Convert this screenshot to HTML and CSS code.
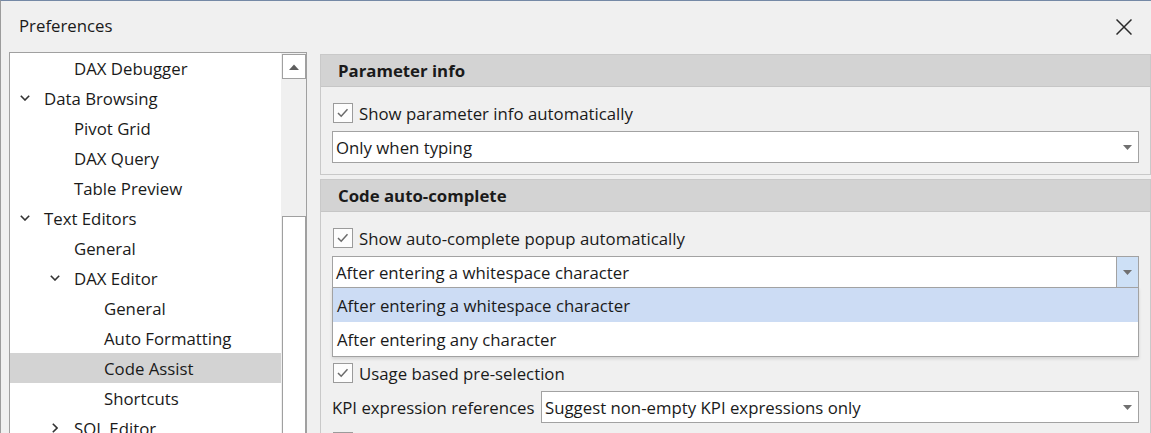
FILE: index.html
```html
<!DOCTYPE html>
<html lang="en">
<head>
<meta charset="utf-8">
<title>Preferences</title>
<link rel="stylesheet" href="styles.css">
</head>
<body>
<div class="window">
  <div class="titlebar">
    <span class="title">Preferences</span>
    <button class="close" aria-label="Close">
      <svg width="16" height="16" viewBox="0 0 16 16"><path d="M0.5 0.5 L15.5 15.5 M15.5 0.5 L0.5 15.5" stroke="#2b2b2b" stroke-width="1.5" fill="none"/></svg>
    </button>
  </div>
  <div class="main">
    <div class="tree-panel">
      <ul class="tree">
        <li class="level-1"><span class="twisty"></span><span>DAX Debugger</span></li>
        <li class="level-0"><span class="twisty"><svg class="chev" width="10" height="6" viewBox="0 0 10 6"><path d="M0.8 0.8 L5 5 L9.2 0.8" /></svg></span><span>Data Browsing</span></li>
        <li class="level-1"><span class="twisty"></span><span>Pivot Grid</span></li>
        <li class="level-1"><span class="twisty"></span><span>DAX Query</span></li>
        <li class="level-1"><span class="twisty"></span><span>Table Preview</span></li>
        <li class="level-0"><span class="twisty"><svg class="chev" width="10" height="6" viewBox="0 0 10 6"><path d="M0.8 0.8 L5 5 L9.2 0.8" /></svg></span><span>Text Editors</span></li>
        <li class="level-1"><span class="twisty"></span><span>General</span></li>
        <li class="level-1"><span class="twisty"><svg class="chev" width="10" height="6" viewBox="0 0 10 6"><path d="M0.8 0.8 L5 5 L9.2 0.8" /></svg></span><span>DAX Editor</span></li>
        <li class="level-2"><span class="twisty"></span><span>General</span></li>
        <li class="level-2"><span class="twisty"></span><span>Auto Formatting</span></li>
        <li class="level-2 selected"><span class="twisty"></span><span>Code Assist</span></li>
        <li class="level-2"><span class="twisty"></span><span>Shortcuts</span></li>
        <li class="level-1"><span class="twisty"><svg class="chev right" width="6" height="10" viewBox="0 0 6 10"><path d="M0.8 0.8 L5 5 L0.8 9.2" /></svg></span><span>SQL Editor</span></li>
      </ul>
      <div class="scrollbar">
        <div class="sb-btn">
          <svg width="10" height="6" viewBox="0 0 10 6"><path d="M0 6 L5 0.5 L10 6 Z" fill="#5e5e5e"/></svg>
        </div>
        <div class="sb-thumb"></div>
      </div>
    </div>

    <div class="pages">
      <section class="group">
        <div class="group-head">Parameter info</div>
        <div class="group-body">
          <div class="check-row">
            <span class="checkbox"><svg width="18" height="18" viewBox="0 0 18 18"><path d="M4 9 L7.2 12.2 L13.5 5.2" /></svg></span>
            <span>Show parameter info automatically</span>
          </div>
          <div class="combo">
            <span class="combo-text">Only when typing</span>
            <span class="combo-btn"><svg width="9" height="5" viewBox="0 0 9 5"><path d="M0 0 L9 0 L4.5 5 Z"/></svg></span>
          </div>
        </div>
      </section>

      <section class="group">
        <div class="group-head">Code auto-complete</div>
        <div class="group-body">
          <div class="check-row">
            <span class="checkbox"><svg width="18" height="18" viewBox="0 0 18 18"><path d="M4 9 L7.2 12.2 L13.5 5.2" /></svg></span>
            <span>Show auto-complete popup automatically</span>
          </div>
          <div class="combo open">
            <span class="combo-text">After entering a whitespace character</span>
            <span class="combo-btn"><svg width="9" height="5" viewBox="0 0 9 5"><path d="M0 0 L9 0 L4.5 5 Z"/></svg></span>
            <div class="popup">
              <div class="popup-item hl">After entering a whitespace character</div>
              <div class="popup-item">After entering any character</div>
            </div>
          </div>
          <div class="check-row below-popup">
            <span class="checkbox"><svg width="18" height="18" viewBox="0 0 18 18"><path d="M4 9 L7.2 12.2 L13.5 5.2" /></svg></span>
            <span>Usage based pre-selection</span>
          </div>
          <div class="field-row">
            <span class="field-label">KPI expression references</span>
            <div class="combo">
              <span class="combo-text">Suggest non-empty KPI expressions only</span>
              <span class="combo-btn"><svg width="9" height="5" viewBox="0 0 9 5"><path d="M0 0 L9 0 L4.5 5 Z"/></svg></span>
            </div>
          </div>
          <div class="check-row next-row">
            <span class="checkbox"></span>
          </div>
        </div>
      </section>
    </div>
  </div>
</div>
</body>
</html>
```

FILE: styles.css
```css
* { box-sizing: border-box; }

html, body {
  margin: 0;
  padding: 0;
}

body {
  width: 1151px;
  height: 433px;
  overflow: hidden;
  background: #f0f0f0;
  font-family: "Open Sans", "Noto Sans", sans-serif;
  font-size: 16.8px;
  color: #1a1a1a;
}

.window {
  height: 433px;
  border-top: 1px solid #7589a6;
  border-left: 1px solid #9c9c9c;
  overflow: hidden;
}

/* Title bar */
.titlebar {
  height: 51px;
  display: flex;
  align-items: center;
  justify-content: space-between;
  padding-left: 18px;
}

.title {
  color: #1a1a1a;
  margin-bottom: 3px;
}

.close {
  width: 46px;
  height: 51px;
  margin-right: 4px;
  border: 0;
  padding: 0;
  background: none;
  display: flex;
  align-items: center;
  justify-content: center;
}

/* Main area */
.main {
  display: flex;
  align-items: flex-start;
  padding-left: 8px;
}

.tree-panel {
  width: 298px;
  height: 420px;
  border: 1px solid #a0a0a0;
  background: #fff;
  display: flex;
}

.tree {
  list-style: none;
  margin: 0;
  padding: 0;
  width: 271px;
  flex: none;
}

.tree li {
  height: 30px;
  display: flex;
  align-items: center;
  white-space: nowrap;
  color: #1a1a1a;
}

.tree li.selected {
  background: #d3d3d3;
}

.tree li.level-1 { padding-left: 30px; }
.tree li.level-2 { padding-left: 60px; }

.twisty {
  width: 34px;
  flex: none;
  padding-left: 10px;
  display: flex;
  align-items: center;
}

.chev path {
  fill: none;
  stroke: #333;
  stroke-width: 1.6;
}

.chev.right {
  margin-left: 2px;
}

.scrollbar {
  width: 25px;
  flex: none;
  align-self: stretch;
  background: #f0f0f0;
  padding: 1px 0 0 1px;
  display: flex;
  flex-direction: column;
}

.sb-btn {
  height: 25px;
  border: 1px solid #a0a0a0;
  background: #fff;
  display: flex;
  align-items: center;
  justify-content: center;
}

.sb-thumb {
  margin-top: 137px;
  height: 240px;
  border: 1px solid #a0a0a0;
  background: #fff;
}

/* Option pages */
.pages {
  width: 831px;
  margin-left: 13px;
  padding-top: 2px;
}

.group {
  border: 1px solid #c9c9c9;
  margin-bottom: 4px;
}

.group-head {
  height: 32px;
  background: #d3d3d3;
  border-bottom: 1px solid #c6c6c6;
  padding-left: 17px;
  font-weight: 700;
  display: flex;
  align-items: center;
  color: #1a1a1a;
}

.group-body {
  padding: 11px 11px 11px;
}

.check-row {
  height: 30px;
  display: flex;
  align-items: center;
  gap: 6px;
  padding-left: 1px;
  white-space: nowrap;
}

.checkbox {
  width: 20px;
  height: 20px;
  flex: none;
  border: 1px solid #9b9b9b;
  background: #fdfdfd;
  display: flex;
  align-items: center;
  justify-content: center;
}

.checkbox path {
  fill: none;
  stroke: #6a6a6a;
  stroke-width: 1.5;
}

.combo {
  margin-top: 3px;
  height: 32px;
  border: 1px solid #a2a2a2;
  background: #fff;
  display: flex;
  align-items: center;
  position: relative;
}

.combo-text {
  flex: 1;
  padding-left: 3px;
  white-space: nowrap;
}

.combo-btn {
  width: 22px;
  align-self: stretch;
  display: flex;
  align-items: center;
  justify-content: center;
}

.combo-btn path {
  fill: #707070;
}

.combo.open .combo-btn {
  background: #cde0f6;
  border-left: 1px solid #a2a2a2;
}

.popup {
  position: absolute;
  left: -1px;
  right: -1px;
  top: 100%;
  border: 1px solid #a2a2a2;
  background: #fff;
  box-shadow: 0 2px 3px rgba(0, 0, 0, 0.12);
  z-index: 2;
}

.popup-item {
  height: 34px;
  display: flex;
  align-items: center;
  padding-left: 4px;
  white-space: nowrap;
}

.popup-item.hl {
  background: #ccdcf4;
}

.check-row.below-popup {
  margin-top: 70px;
}

.field-row {
  margin-top: 3px;
  height: 32px;
  display: flex;
  align-items: center;
}

.field-label {
  flex: 0 0 209px;
  white-space: nowrap;
}

.field-row .combo {
  flex: 1;
  margin-top: 0;
}

.check-row.next-row {
  margin-top: 4px;
}
```
